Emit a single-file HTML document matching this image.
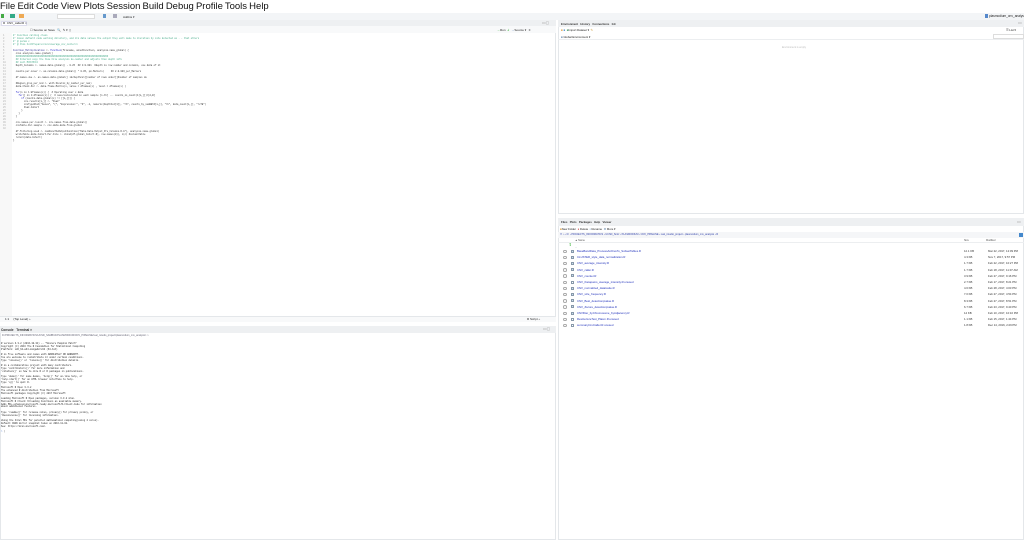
<!DOCTYPE html>
<html><head><meta charset="utf-8"><style>
*{margin:0;padding:0;box-sizing:border-box}
body{width:1024px;height:540px;overflow:hidden;background:#fff;font-family:"Liberation Sans",sans-serif;position:relative}
.a{position:absolute}
.t{font-size:3.6px;line-height:4px;white-space:pre;color:#222}
.code{font-family:"Liberation Mono",monospace;font-size:2.3px;line-height:3.0px;white-space:pre;color:#333}
.fr{position:absolute;left:0;width:466px;height:6px;font-size:2.8px;line-height:6px;white-space:nowrap}
.fr .c{position:absolute;left:5px;top:1.5px;width:3.5px;height:3.5px;border:0.4px solid #aaa;border-radius:50%}
.fr .i{position:absolute;left:13px;top:1.5px;width:2.5px;height:3px;background:#cde;border:0.4px solid #89a}
.fr .n{position:absolute;left:19px;color:#2233bb}
.fr .s{position:absolute;left:406px;color:#333}
.fr .m{position:absolute;left:430px;color:#333}
.bd{border:0.5px solid #e4e7ea}
</style></head><body>
<div class="a" style="left:0;top:0;font-size:9.5px;line-height:13px;color:#111;white-space:pre;word-spacing:-0.5px">File Edit Code View Plots Session Build Debug Profile Tools Help</div>
<div class="a" style="left:0;top:13px;width:1024px;height:7px;background:#f3f5f7"></div>
<div class="a" style="left:1px;top:14px;width:3px;height:4px;background:#4a4"></div>
<div class="a" style="left:10px;top:14px;width:5px;height:4px;background:#3a8"></div>
<div class="a" style="left:19px;top:14px;width:5px;height:4px;background:#ea5"></div>
<div class="a" style="left:57px;top:14px;width:38px;height:4.5px;border:0.5px solid #ddd;background:#fff"></div>
<div class="a" style="left:103px;top:14px;width:3px;height:4px;background:#69c"></div>
<div class="a" style="left:113px;top:14px;width:4px;height:4px;background:#aab"></div>
<div class="a t" style="left:123px;top:14.5px;font-size:3px">Addins ▾</div>
<div class="a" style="left:985px;top:13.5px;width:3px;height:4px;background:#58c"></div>
<div class="a t" style="left:989px;top:13.5px;font-size:3.2px">plasmodium_cnv_analysis ▾</div>
<!-- left pane -->
<div class="a bd" style="left:0;top:20px;width:556px;height:300px;background:#fff"></div>
<div class="a" style="left:0;top:20px;width:556px;height:6px;background:#eef0f2"></div>
<div class="a" style="left:1px;top:20.5px;width:26px;height:5.5px;background:#fff;border:0.5px solid #dde"></div>
<div class="a t" style="left:3px;top:21px;font-size:3px">R  CNV_callerR ×</div>
<div class="a" style="left:0;top:26px;width:556px;height:7px;background:#f8f9fa"></div>
<div class="a t" style="left:30px;top:27.5px;font-size:3px">☐ Source on Save   🔍  ✎ ▾  ▯</div>
<div class="a t" style="left:497px;top:27.5px;font-size:3px"><span style="color:#2a2">→</span>Run  <span style="color:#2a2">↲</span>  <span style="color:#36a">→</span>Source ▾   ≡</div>
<div class="a" style="left:542px;top:20px;font-size:4px;color:#999">▭◻</div>
<div class="a" style="left:0;top:33px;width:12px;height:284px;background:#f8f8f8"></div>
<div class="a code" style="left:3px;top:34px;color:#aaa">1
2
3
4
5
6
7
8
9
10
11
12
13
14
15
16
17
18
19
20
21
22
23
24
25
26
27
28
29
30
31
32</div>
<div class="a code" style="left:13px;top:34px"><span style="color:#4a8">#' Function calling class
#' Given default code working directory, and its data values the output they will make to iteration by site detected as . - that others
#' @ param x
#' @ this FullPrepare/cnvs/average_cnv_caller/n</span>

<span style="color:#339">Function_Multiplication</span> &lt;- <span style="color:#22c">function</span>(filename, annotFunction, analysis.name_global) {
  cnvs analysis.name.global()
<span style="color:#4a8">  ###################################################################
  ## Internal copy the time File analysis de-number and adjusts than depth info
  ## call MCO/MCC4</span>
  Depth_Columns &lt;- names.data.global() - 0.25  ## 1:0.001  #depth is row number and columns, use data of it

  counts.per.cover &lt;- as.columns.data.global() * 0.05, pm.Markers)     ## 2.0.003_per_Markers

  df.names.Jee &lt;- as.names.data.global() id/depthcol[[number of rows under]]#number of samples de

  #Region_grep_per_ind &lt;- with Kinetic_by_number_per_num)
  data.Chunk.Per &lt;- data.frame.Matrix(x, value = dfnames(x) , level = dfnames(x) )

  <span style="color:#22c">for</span>(i in 1:dfnames(x)) {  # Operating over x data
    <span style="color:#22c">for</span>(j in 1:dfnames(x)) {  # save/calculated in each sample [i-th] ... counts_is_count(1[i,j])=[A,B]
      <span style="color:#22c">if</span> (counts.data.global(x) != [[i,j]]) {
        cnv.results[i,j] &lt;- "Peak"
        cnvTypeStat("Genes", "(", "Expression:", "3", -1, numeric(DepthCol[1]), "rb", counts_by_sumBETA[i,j], "rb", data_count[i,j], "rvTE")
        Peak.Cohort
      }
    }
  }

  cnv.names.per.result &lt;- cnv.names.from.data.global()
  cnvTable.Per.sample &lt;- cnv.data.data.from.global

  df.filtering.used &lt;- combineTheOutputFunction("Data.Data.Output_Pre_Columns.R.G"), analysis.name.global)
  writeTable.data.Cohort.Per.File &lt;- cbind(df.global_Cohort.R), row.names(0)), c(c) #columnTable
  return(data.Cohort)
}</div>
<div class="a" style="left:0;top:316px;width:556px;height:6px;background:#f8f9fa;border-top:0.5px solid #e4e7ea"></div>
<div class="a t" style="left:5px;top:317px;font-size:3px">1:1     (Top Level) ÷</div>
<div class="a t" style="left:527px;top:317px;font-size:3px">R Script ÷</div>
<!-- console -->
<div class="a bd" style="left:0;top:326px;width:556px;height:214px;background:#fff"></div>
<div class="a" style="left:0;top:326px;width:556px;height:7px;background:#eef0f2"></div>
<div class="a t" style="left:1px;top:327.5px;font-size:3.2px;font-weight:bold;color:#333">Console   Terminal ×</div>
<div class="a" style="left:543px;top:326px;font-size:4px;color:#999">▭◻</div>
<div class="a t" style="left:2px;top:334px;font-size:2.5px;color:#667">D:/PROJECTS_INFORMATICS/UCSD_SAMBUF/PLASMODIUM/CNV_PIPELINE/real_rstudio_project/plasmodium_cnv_analysis/ ⇨</div>
<div class="a code" style="left:1px;top:343px;font-size:2.3px;line-height:2.75px;color:#222">R version 3.3.2 (2016-10-31) -- "Sincere Pumpkin Patch"
Copyright (C) 2016 The R Foundation for Statistical Computing
Platform: x86_64-w64-mingw32/x64 (64-bit)

R is free software and comes with ABSOLUTELY NO WARRANTY.
You are welcome to redistribute it under certain conditions.
Type 'license()' or 'licence()' for distribution details.

R is a collaborative project with many contributors.
Type 'contributors()' for more information and
'citation()' on how to cite R or R packages in publications.

Type 'demo()' for some demos, 'help()' for on-line help, or
'help.start()' for an HTML browser interface to help.
Type 'q()' to quit R.

Microsoft R Open 3.3.2
The enhanced R distribution from Microsoft
Microsoft packages Copyright (C) 2017 Microsoft

Loading Microsoft R Open packages, version 3.3.2 mran.
Microsoft R Client threading Functions as available memory.
Adds MKL-enhanced-microsoft-ready.microsoft/R-Client-Code for information
about additional features.

Type 'readme()' for release notes, privacy() for privacy policy, or
'RevoLicense()' for licensing information.

Using the Intel MKL for parallel mathematical computing(using 4 cores).
Default CRAN mirror snapshot taken on 2016-11-01.
See: https://mran.microsoft.com/.

<span style="color:#36c">&gt;</span> |</div>
<!-- right: environment -->
<div class="a bd" style="left:558px;top:20px;width:466px;height:194px;background:#fff"></div>
<div class="a" style="left:558px;top:20px;width:466px;height:7px;background:#eef0f2"></div>
<div class="a t" style="left:561px;top:21.5px;font-size:2.8px;font-weight:bold;color:#333">Environment   History   Connections   Git</div>
<div class="a" style="left:1018px;top:20px;font-size:4px;color:#999">▭</div>
<div class="a t" style="left:561px;top:28px;font-size:2.8px"><span style="color:#d93">■</span> <span style="color:#48c">■</span>  <span style="color:#4a6">■</span>Import Dataset ▾  <span style="color:#c93">✎</span></div>
<div class="a t" style="left:1006px;top:28px;font-size:2.8px">☰ List ▾</div>
<div class="a" style="left:558px;top:33.5px;width:466px;height:6px;border-bottom:0.5px solid #eceef0"></div>
<div class="a t" style="left:561px;top:34.5px;font-size:2.8px"><span style="color:#68a">■</span> Global Environment ▾</div>
<div class="a" style="left:993px;top:34px;width:31px;height:5px;border:0.5px solid #ddd"></div>
<div class="a t" style="left:782px;top:46px;font-size:2.5px;color:#bbb">Environment is empty</div>
<!-- right: files -->
<div class="a bd" style="left:558px;top:218px;width:466px;height:322px;background:#fff"></div>
<div class="a" style="left:558px;top:218px;width:466px;height:8px;background:#eef0f2"></div>
<div class="a t" style="left:561px;top:220px;font-size:2.8px;font-weight:bold;color:#333">Files   Plots   Packages   Help   Viewer</div>
<div class="a" style="left:1017px;top:219px;font-size:4px;color:#999">▭</div>
<div class="a t" style="left:560px;top:226.5px;font-size:2.8px"><span style="color:#d93">■</span>New Folder  <span style="color:#c44">●</span> Delete  <span style="color:#48c">▪</span> Rename  <span style="color:#68a">⚙</span> More ▾</div>
<div class="a" style="left:558px;top:232px;width:466px;height:6px;background:#f5f6f8"></div>
<div class="a t" style="left:560px;top:233px;font-size:2.5px;color:#3344aa">☐ ⌂ › D: › PROJECTS_INFORMATICS › UCSD_Smiz › PLASMODIUM › CNV_PIPELINE › real_rstudio_project › plasmodium_cnv_analysis › R</div>
<div class="a" style="left:1019px;top:233px;width:4px;height:4px;background:#48c"></div>
<div class="a" style="left:558px;top:238px;width:466px;height:5px;border-bottom:0.5px solid #eceef0"></div>
<div class="a t" style="left:575px;top:238.5px;font-size:2.5px;color:#555">▲ Name</div>
<div class="a t" style="left:964px;top:238.5px;font-size:2.5px;color:#555">Size</div>
<div class="a t" style="left:986px;top:238.5px;font-size:2.5px;color:#555">Modified</div>
<div class="a t" style="left:569px;top:243px;font-size:4px;color:#2a2">⮤</div>
<div class="a t" style="left:575px;top:245px;font-size:3px;color:#335">..</div>
<div class="a" style="left:558px;top:248px;width:466px;height:90px">
<div class="fr" style="top:0"><span class="c"></span><span class="i"></span><span class="n">BaseBandData_ProcessArchiveTo_SubsetTables.R</span><span class="s">12.1 KB</span><span class="m">Mar 22, 2017, 12:09 PM</span></div>
<div class="fr" style="top:6.2px"><span class="c"></span><span class="i"></span><span class="n">CLUSTER_style_data_normalization.R</span><span class="s">4.3 KB</span><span class="m">Nov 7, 2017, 9:57 PM</span></div>
<div class="fr" style="top:12.4px"><span class="c"></span><span class="i"></span><span class="n">CNV_average_intensity.R</span><span class="s">1.7 KB</span><span class="m">Feb 22, 2017, 10:27 PM</span></div>
<div class="fr" style="top:18.6px"><span class="c"></span><span class="i"></span><span class="n">CNV_caller.R</span><span class="s">1.7 KB</span><span class="m">Feb 18, 2017, 11:07 AM</span></div>
<div class="fr" style="top:24.8px"><span class="c"></span><span class="i"></span><span class="n">CNV_counter.R</span><span class="s">3.9 KB</span><span class="m">Feb 27, 2017, 9:16 PM</span></div>
<div class="fr" style="top:31px"><span class="c"></span><span class="i" style="background:#fff"></span><span class="n">CNV_thetapams_average_intensity.R.unused</span><span class="s">2.7 KB</span><span class="m">Feb 17, 2017, 8:21 PM</span></div>
<div class="fr" style="top:37.2px"><span class="c"></span><span class="i"></span><span class="n">CNV_normalized_datatosite.R</span><span class="s">4.6 KB</span><span class="m">Feb 28, 2017, 4:03 PM</span></div>
<div class="fr" style="top:43.4px"><span class="c"></span><span class="i"></span><span class="n">CNV_size_frequency.R</span><span class="s">7.0 KB</span><span class="m">Feb 27, 2017, 4:54 PM</span></div>
<div class="fr" style="top:49.6px"><span class="c"></span><span class="i"></span><span class="n">CNV_Best_detectionpvalue.R</span><span class="s">8.3 KB</span><span class="m">Feb 27, 2017, 8:51 PM</span></div>
<div class="fr" style="top:55.8px"><span class="c"></span><span class="i"></span><span class="n">CNV_Zscore_detectionpvalue.R</span><span class="s">6.7 KB</span><span class="m">Feb 23, 2017, 9:40 PM</span></div>
<div class="fr" style="top:62px"><span class="c"></span><span class="i"></span><span class="n">CNVfilter_byChromosome_byAdjacency.R</span><span class="s">14 KB</span><span class="m">Feb 10, 2017, 10:10 PM</span></div>
<div class="fr" style="top:68.2px"><span class="c"></span><span class="i" style="background:#fff"></span><span class="n">RestructureTest_Plasm.R.unused</span><span class="s">1.1 KB</span><span class="m">Feb 15, 2017, 1:44 PM</span></div>
<div class="fr" style="top:74.4px"><span class="c"></span><span class="i" style="background:#fff"></span><span class="n">summaryCnvCaller.R.unused</span><span class="s">1.8 KB</span><span class="m">Dec 14, 2016, 2:29 PM</span></div>
</div>
</body></html>
